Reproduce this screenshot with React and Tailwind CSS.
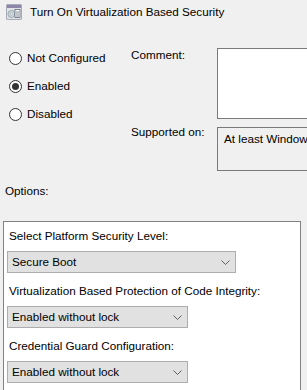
import React from 'react';

const font = { fontFamily: '"Liberation Sans", Arial, sans-serif' };

function PolicyIcon() {
  return (
    <svg width="16" height="16" viewBox="0 0 16 16">
      <rect x="0.5" y="0.5" width="15" height="15" fill="#5f6a78" />
      <rect x="1" y="1" width="14" height="3" fill="#8e86a8" />
      <rect x="1" y="4" width="14" height="11" fill="#dfe3e8" />
      <circle cx="5.5" cy="10" r="3.6" fill="#c9d4dd" stroke="#7d8a96" strokeWidth="0.6" />
      <circle cx="5.5" cy="10" r="1.1" fill="#ffffff" stroke="#7d8a96" strokeWidth="0.4" />
      <path d="M3 8.5 L4.6 9.4" stroke="#9fd36b" strokeWidth="0.8" />
      <rect x="9" y="5.5" width="5" height="8" fill="#ffffff" stroke="#4b5563" strokeWidth="0.7" />
      <path d="M10 8 H13 M10 10 H13 M10 12 H13" stroke="#4b5563" strokeWidth="0.7" />
    </svg>
  );
}

function Radio({ label, checked }) {
  return (
    <div className="flex items-center h-[28px]">
      <span className="w-[13px] h-[13px] rounded-full border border-[#333333] bg-white flex items-center justify-center shrink-0">
        {checked && <span className="w-[7px] h-[7px] rounded-full bg-[#333333]" />}
      </span>
      <span className="ml-[5px] leading-[14px]">{label}</span>
    </div>
  );
}

function Chevron() {
  return (
    <svg width="9" height="5" viewBox="0 0 9 5" className="shrink-0">
      <polyline points="0.5,0.5 4.5,4.5 8.5,0.5" fill="none" stroke="#606060" strokeWidth="1" />
    </svg>
  );
}

function Dropdown({ value, width }) {
  return (
    <div
      className="h-[22px] bg-[#e1e1e1] border border-[#adadad] flex items-center justify-between pl-[4px] pr-[5px]"
      style={{ width }}
    >
      <span className="leading-[14px]">{value}</span>
      <Chevron />
    </div>
  );
}

export default function App() {
  return (
    <div
      className="w-[307px] h-[390px] bg-[#f0f0f0] overflow-hidden text-black text-[11.7px]"
      style={font}
    >
      <div className="h-[24px] flex items-center pl-[6px] gap-[8px]">
        <PolicyIcon />
        <span className="leading-[14px]">Turn On Virtualization Based Security</span>
      </div>

      <div className="mt-[20px] flex">
        <div className="w-[131px] shrink-0 pl-[9px]">
          <Radio label="Not Configured" />
          <Radio label="Enabled" checked />
          <Radio label="Disabled" />
        </div>
        <div className="flex flex-col">
          <div className="flex items-start mt-[4px]">
            <span className="w-[86px] shrink-0 leading-[14px]">Comment:</span>
            <div className="w-[120px] h-[71px] shrink-0 bg-white border border-[#7a7a7a]" />
          </div>
          <div className="flex items-start mt-[6px]">
            <span className="w-[86px] shrink-0 leading-[14px]">Supported on:</span>
            <div className="w-[120px] h-[44px] shrink-0 mt-[2px] bg-[#f0f0f0] border border-[#7a7a7a] pl-[6px] pt-[2px] overflow-hidden">
              <span className="leading-[14px] whitespace-nowrap">At least Windows Server 2016, Windows 10</span>
            </div>
          </div>
        </div>
      </div>

      <div className="mt-[13px] pl-[5px] leading-[14px]">Options:</div>

      <div className="mt-[23px] ml-[3px] w-[298px] h-[200px] bg-white border border-[#828282] px-[3px] pt-[7px]">
        <div className="pl-[2px] leading-[14px]">Select Platform Security Level:</div>
        <div className="mt-[8px]">
          <Dropdown value="Secure Boot" width={229} />
        </div>
        <div className="mt-[11px] pl-[2px] leading-[14px]">Virtualization Based Protection of Code Integrity:</div>
        <div className="mt-[8px]">
          <Dropdown value="Enabled without lock" width={181} />
        </div>
        <div className="mt-[11px] pl-[2px] leading-[14px]">Credential Guard Configuration:</div>
        <div className="mt-[8px]">
          <Dropdown value="Enabled without lock" width={181} />
        </div>
      </div>
    </div>
  );
}
